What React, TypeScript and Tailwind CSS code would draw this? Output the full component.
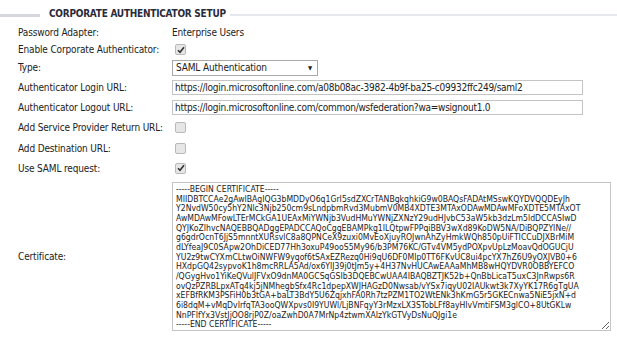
import React from 'react';

const certLines = [
  '-----BEGIN CERTIFICATE-----',
  'MIIDBTCCAe2gAwIBAgIQG3bMDDyO6q1GrI5sdZXCrTANBgkqhkiG9w0BAQsFADAtMSswKQYDVQQDEyJh',
  'Y2NvdW50cy5hY2Nlc3Njb250cm9sLndpbmRvd3MubmV0MB4XDTE3MTAxODAwMDAwMFoXDTE5MTAxOT',
  'AwMDAwMFowLTErMCkGA1UEAxMiYWNjb3VudHMuYWNjZXNzY29udHJvbC53aW5kb3dzLm5ldDCCASIwD',
  'QYJKoZIhvcNAQEBBQADggEPADCCAQoCggEBAMPkg1ILQtpwFPPqiBBV3wXd89KoDW5NA/DiBQPZYINe//',
  'g6gdrOcnT6JjS5mnntXURsvlC8a8QPNCeX9zuxi0MvEoXjuyROJwnAhZyHmkWQh850pUiFTICCuDJXBrMiM',
  'dLYfeaJ9C0SApw2OhDiCED77Hh3oxuP49ooS5My96/b3PM76KC/GTv4VM5ydPOXpvUpLzMoavQdOGUCjU',
  'YU2z9twCYXmCLtwOiNWFW9yqof6tSAxEZRezq0Hi9qU6DF0MIp0TT6FKvUC8ui4pcYX7hZ6U9yOXJVB0+6',
  'HXdpGQ42sypvoK1h8mcRRLA5Ad/ox6YIJ39j0tJm5y+4H37NvHUCAwEAAaMhMB8wHQYDVR0OBBYEFCO',
  '/QGygHvo1YiKeQVulJFVxO9dnMA0GCSqGSIb3DQEBCwUAA4IBAQBZTJK52b+QnBbLicaT5uxC3JnRwps6R',
  'ovQzPZRBLpxATq4kj5jNMhegbSfx4Rc1dpepXWJHAGzD0Nwsab/vYSx7iqyU02IAUkwt3k7XyYK17R6gTgUA',
  'xEFBfRKM3PSFiH0b3tGA+baLT3BdY5U6ZqjxhFA0Rh7tzPZM1TO2WtENk3hKmG5r5GKECnwa5NiE5jxN+d',
  '6i8dqM+vMqDvIrfqTA3ooQWXpvs0I9YUWl/LjBNFqyY3rMzxLX3STobLFf8ayHIvVmtiFSM3glCO+8UtGKLw',
  'NnPFIfYx3VstJjOO8rjP0Z/oaZwhD0A7MrNp4ztwmXAIzYkGTVyDsNuQJgi1e',
  '-----END CERTIFICATE-----',
];

function Check({ checked }: { checked: boolean }) {
  return (
    <span className="ml-[3px] flex h-[11px] w-[11px] items-center justify-center rounded-[2px] border border-[#b9b9b9] bg-[#e6e6e6]">
      {checked && (
        <svg width="8" height="8" viewBox="0 0 8 8">
          <path d="M1 4.2 L3 6.3 L7 1.2" fill="none" stroke="#333" strokeWidth="1.6" />
        </svg>
      )}
    </span>
  );
}

function Row({ label, h, children }: { label: string; h: string; children?: React.ReactNode }) {
  return (
    <div className={`flex items-center ${h}`}>
      <div className="w-[172px] shrink-0 whitespace-nowrap pl-[18px]">{label}</div>
      {children}
    </div>
  );
}

export default function App() {
  return (
    <div className="h-[340px] w-[617px] overflow-hidden bg-white text-[10px] tracking-[-0.15px] text-[#222] [font-family:'DejaVu_Sans_Condensed','DejaVu_Sans',sans-serif]">
      <div className="flex h-[23px] items-end pb-[3px]">
        <div className="mb-[3px] h-[3px] w-[40px] bg-[#d6d6de]" />
        <div className="ml-[9px] text-[10px] font-bold leading-[12px] tracking-[-0.25px] text-[#2b2b3a]">CORPORATE AUTHENTICATOR SETUP</div>
        <div className="mb-[4px] ml-[4px] h-[2px] flex-1 bg-[#e6e6ee]" />
      </div>
      <Row label="Password Adapter:" h="h-[18px]">
        <div>Enterprise Users</div>
      </Row>
      <Row label="Enable Corporate Authenticator:" h="h-[17px]">
        <Check checked />
      </Row>
      <Row label="Type:" h="h-[19px]">
        <div className="flex h-[16px] w-[146px] items-center justify-between border border-[#a9a9a9] bg-white pl-[3px] pr-[5px]">
          <span>SAML Authentication</span>
          <span className="text-[6px]">▼</span>
        </div>
      </Row>
      <Row label="Authenticator Login URL:" h="h-[20px]">
        <div className="flex h-[15px] w-[411px] items-center overflow-hidden whitespace-nowrap border border-[#c4c4c4] bg-white pl-[2px] tracking-[-0.25px]">
          https://login.microsoftonline.com/a08b08ac-3982-4b9f-ba25-c09932ffc249/saml2
        </div>
      </Row>
      <Row label="Authenticator Logout URL:" h="h-[20px]">
        <div className="flex h-[15px] w-[411px] items-center overflow-hidden whitespace-nowrap border border-[#c4c4c4] bg-white pl-[2px] tracking-[-0.25px]">
          https://login.microsoftonline.com/common/wsfederation?wa=wsignout1.0
        </div>
      </Row>
      <Row label="Add Service Provider Return URL:" h="h-[21px]">
        <Check checked={false} />
      </Row>
      <Row label="Add Destination URL:" h="h-[20px]">
        <Check checked={false} />
      </Row>
      <Row label="Use SAML request:" h="h-[20px]">
        <Check checked />
      </Row>
      <div className="mt-[4px] flex items-center">
        <div className="w-[172px] shrink-0 pl-[18px]">Certificate:</div>
        <textarea
          readOnly
          wrap="off"
          value={certLines.join('\n')}
          className="h-[149px] w-[439px] resize overflow-hidden border border-[#c4c4c4] bg-white px-[3px] pt-[2px] text-[8.6px] leading-[9.65px] tracking-normal text-[#222] outline-none [font-family:'DejaVu_Sans_Condensed','DejaVu_Sans',sans-serif]"
        />
      </div>
    </div>
  );
}
